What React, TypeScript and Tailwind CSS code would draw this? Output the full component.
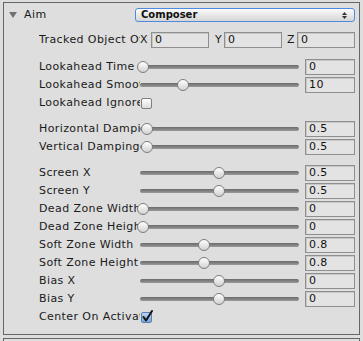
import React from 'react';

interface SliderRow {
  label: string;
  thumb: number; // thumb centre, px from slider start
  value: string;
}

const FONT = { fontFamily: '"DejaVu Sans", Verdana, sans-serif' };

const Label: React.FC<{ text: string }> = ({ text }) => (
  <div className="w-[101px] shrink-0 overflow-hidden whitespace-nowrap text-[11px] leading-4 tracking-[0.4px] text-[#1a1a1a]">
    {text}
  </div>
);

const ValueBox: React.FC<{ value: string; width?: string }> = ({ value, width = 'w-[50px]' }) => (
  <div
    className={`${width} h-4 shrink-0 border border-[#8f8f8f] bg-[#e3e3e3] pl-[3px] text-[11px] leading-[14px] tracking-[0.4px] text-[#111] shadow-[inset_1px_1px_0_#c8c8c8]`}
  >
    {value}
  </div>
);

const Slider: React.FC<{ thumb: number }> = ({ thumb }) => (
  <div className="relative h-4 w-[160px] shrink-0">
    <div className="absolute left-0 right-[1px] top-[6px] h-[4px] rounded-full bg-gradient-to-b from-[#6a6a6a] to-[#9a9a9a]" />
    <div
      className="absolute top-[2px] h-[12px] w-[12px] rounded-full border border-[#7d7d7d] bg-gradient-to-b from-[#ffffff] to-[#d2d2d2]"
      style={{ left: thumb - 6 }}
    />
  </div>
);

const Row: React.FC<{ row: SliderRow; className?: string }> = ({ row, className = 'mt-[2px]' }) => (
  <div className={`flex h-4 items-center ${className}`}>
    <Label text={row.label} />
    <Slider thumb={row.thumb} />
    <div className="w-[5px] shrink-0" />
    <ValueBox value={row.value} />
  </div>
);

const Checkbox: React.FC<{ checked?: boolean }> = ({ checked }) => (
  <div className="relative ml-[1px] h-[11px] w-[11px]">
    <div
      className={`h-[11px] w-[11px] rounded-[2px] border ${
        checked
          ? 'border-[#5a7fb0] bg-gradient-to-b from-[#bcd6f2] to-[#77a6dc]'
          : 'border-[#7f7f7f] bg-gradient-to-b from-[#fdfdfd] to-[#dcdcdc]'
      }`}
    />
    {checked && (
      <svg className="absolute left-[1px] top-[-2px]" width="11" height="12" viewBox="0 0 11 12">
        <path d="M1.5 7 L4 10.5 L10 1" fill="none" stroke="#141414" strokeWidth="2" strokeLinecap="round" strokeLinejoin="round" />
      </svg>
    )}
  </div>
);

const lookahead: SliderRow[] = [
  { label: 'Lookahead Time', thumb: 3, value: '0' },
  { label: 'Lookahead Smoothing', thumb: 43, value: '10' },
];

const damping: SliderRow[] = [
  { label: 'Horizontal Damping', thumb: 7, value: '0.5' },
  { label: 'Vertical Damping', thumb: 7, value: '0.5' },
];

const screen: SliderRow[] = [
  { label: 'Screen X', thumb: 79, value: '0.5' },
  { label: 'Screen Y', thumb: 79, value: '0.5' },
  { label: 'Dead Zone Width', thumb: 3, value: '0' },
  { label: 'Dead Zone Height', thumb: 3, value: '0' },
  { label: 'Soft Zone Width', thumb: 64, value: '0.8' },
  { label: 'Soft Zone Height', thumb: 64, value: '0.8' },
  { label: 'Bias X', thumb: 79, value: '0' },
  { label: 'Bias Y', thumb: 79, value: '0' },
];

const App: React.FC = () => {
  return (
    <div className="h-[341px] w-[363px] overflow-hidden bg-[#dedede] pt-[2px]" style={FONT}>
      <div className="mx-[3px] border border-[#666666] pb-[9px] pl-[35px] pr-[2px]">
        {/* header */}
        <div className="relative mt-[5px] flex h-[14px] items-center">
          <svg className="absolute left-[-30px] top-[4px]" width="8" height="6" viewBox="0 0 8 6">
            <path d="M0 0 L8 0 L4 6 Z" fill="#707070" />
          </svg>
          <span className="absolute left-[-15px] top-[-1px] text-[11px] leading-4 tracking-[0.4px] text-[#1a1a1a]">Aim</span>
          <div className="ml-[96px] flex h-[14px] w-[220px] items-center justify-between rounded-[3px] border border-[#4f8ae0] bg-gradient-to-b from-[#fbfbfb] to-[#d6d6d6] pl-[5px] pr-[7px]">
            <span className="text-[10px] font-bold leading-3 text-[#111]">Composer</span>
            <svg width="5" height="7" viewBox="0 0 5 7">
              <path d="M0 3 L2.5 0 L5 3 Z M0 4 L5 4 L2.5 7 Z" fill="#333" />
            </svg>
          </div>
        </div>

        {/* tracked object offset */}
        <div className="mt-[10px] flex h-4 items-center text-[11px] leading-4 tracking-[0.4px] text-[#1a1a1a]">
          <Label text="Tracked Object Offset" />
          <span className="w-[11px] shrink-0">X</span>
          <ValueBox value="0" width="w-[58px]" />
          <span className="ml-[6px] w-[9px] shrink-0">Y</span>
          <ValueBox value="0" width="w-[58px]" />
          <span className="ml-[5px] w-[10px] shrink-0">Z</span>
          <ValueBox value="0" width="w-[58px]" />
        </div>

        <Row row={lookahead[0]} className="mt-[11px]" />
        <Row row={lookahead[1]} />
        <div className="mt-[2px] flex h-4 items-center">
          <Label text="Lookahead Ignore Y" />
          <Checkbox />
        </div>

        <Row row={damping[0]} className="mt-[10px]" />
        <Row row={damping[1]} />

        {screen.map((r, i) => (
          <Row key={r.label} row={r} className={i === 0 ? 'mt-[10px]' : 'mt-[2px]'} />
        ))}

        <div className="mt-[2px] flex h-4 items-center">
          <Label text="Center On Activate" />
          <Checkbox checked />
        </div>
      </div>
      <div className="mx-[3px] mt-[3px] h-[20px] border-x border-t border-[#666666]" />
    </div>
  );
};

export default App;
